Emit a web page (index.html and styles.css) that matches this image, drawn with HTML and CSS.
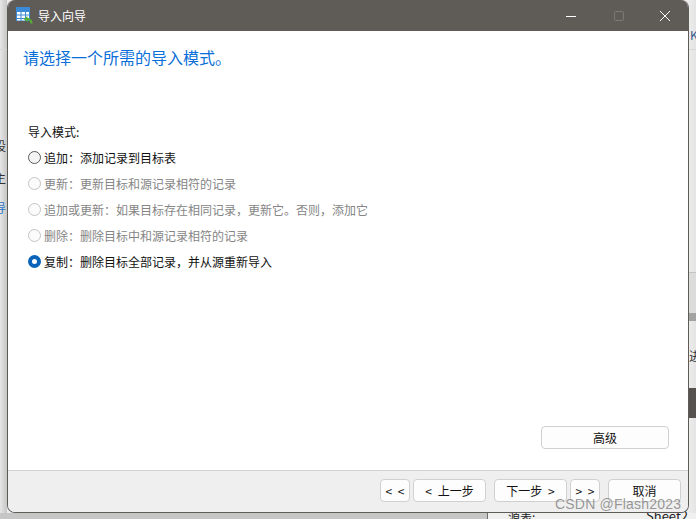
FILE: index.html
```html
<!DOCTYPE html>
<html lang="zh-CN">
<head>
    <meta charset="UTF-8">
    <title>导入向导</title>
    <link rel="stylesheet" href="styles.css">
</head>
<body>
    <!-- bits of the app behind the dialog -->
    <div class="behind-line l1"></div>
    <span class="behind behind-left b1">设</span>
    <span class="behind behind-left b2">主</span>
    <span class="behind behind-left b3">导</span>
    <span class="behind b4">K</span>
    <span class="behind b5">进</span>
    <div class="behind-band"></div>
    <div class="behind-dark"></div>
    <div class="behind-bottom"></div>
    <span class="behind b6">源表:</span>
    <span class="behind b7">Sheet2</span>

    <div class="window">
        <div class="titlebar">
            <svg class="app-icon" width="17" height="17" viewBox="0 0 17 17">
                <rect x="0" y="0" width="14" height="14" fill="#3b8ad8"/>
                <path d="M1 5h3.500v2.500H1zM5.500 5h3.500v2.500H5.500zM10 5h3v2.500h-3zM1 8.500h3.500V11H1zM5.500 8.500h3.500V11H5.500zM10 8.500h3V11h-3zM1 12h3.500v1.500H1zM5.500 12h3.500v1.500H5.500z" fill="#fff"/>
                <path d="M15.500 16.500c0-3-1.500-4.500-5-4.500" fill="none" stroke="#55b033" stroke-width="2.200"/>
                <path d="M7.500 12l4-3v6z" fill="#55b033"/>
            </svg>
            <span class="title">导入向导</span>
            <div class="win-controls">
                <svg class="win-btn" width="46" height="30" viewBox="0 0 46 30"><path d="M16 15.500h10" stroke="#fff" stroke-width="1"/></svg>
                <svg class="win-btn" width="46" height="30" viewBox="0 0 46 30"><rect x="18.500" y="10.500" width="9" height="9" rx="1" fill="none" stroke="#7d7a76"/></svg>
                <svg class="win-btn" width="46" height="30" viewBox="0 0 46 30"><path d="M18 10l10 10M28 10L18 20" stroke="#fff" stroke-width="1"/></svg>
            </div>
        </div>

        <div class="content">
            <h1 class="heading">请选择一个所需的导入模式。</h1>
            <div class="modes">
                <p class="modes-label">导入模式:</p>
                <div class="option"><span class="radio radio-normal"></span>追加&#xFF1A;添加记录到目标表</div>
                <div class="option disabled"><span class="radio"></span>更新&#xFF1A;更新目标和源记录相符的记录</div>
                <div class="option disabled"><span class="radio"></span>追加或更新&#xFF1A;如果目标存在相同记录&#xFF0C;更新它。否则&#xFF0C;添加它</div>
                <div class="option disabled"><span class="radio"></span>删除&#xFF1A;删除目标中和源记录相符的记录</div>
                <div class="option"><span class="radio radio-checked"></span>复制&#xFF1A;删除目标全部记录&#xFF0C;并从源重新导入</div>
            </div>
            <div class="advanced-row">
                <button class="btn btn-advanced">高级</button>
            </div>
        </div>

        <div class="footer">
            <button class="btn btn-skip">&lt; &lt;</button>
            <button class="btn btn-step">&lt; 上一步</button>
            <button class="btn btn-step btn-next">下一步 &gt;</button>
            <button class="btn btn-skip">&gt; &gt;</button>
            <button class="btn btn-step btn-cancel">取消</button>
        </div>
    </div>

    <span class="watermark">CSDN @Flash2023</span>
</body>
</html>
```

FILE: styles.css
```css
html, body {
    margin: 0;
    height: 100%;
}
body {
    position: relative;
    width: 696px;
    height: 519px;
    overflow: hidden;
    background: linear-gradient(90deg, #e6e6e6 0, #c6c6c6 7px, #ececec 7px, #ececec 689px, #e4e4e4 100%);
    font-family: "Noto Sans CJK SC", "Liberation Sans", sans-serif;
}
.behind {
    position: absolute;
    font-size: 12px;
    line-height: 14px;
    color: #333;
}
.behind-left {
    left: -6px;
}
.b1 { top: 139px; }
.b2 { top: 171px; }
.b3 { top: 201px; color: #2a74c4; }
.b4 { top: 28px; left: 690px; color: #3a5a8c; }
.b5 { top: 349px; left: 689px; }
.b6 { top: 510px; left: 508px; color: #222; }
.b7 { top: 509px; left: 646px; color: #222; font-size: 13px; }
.behind-line {
    position: absolute;
    left: 0;
    width: 100%;
    height: 1px;
    background: #d8d8d8;
}
.l1 { top: 49px; }
.behind-band {
    position: absolute;
    top: 272px;
    left: 689px;
    width: 7px;
    height: 40px;
    background: #dcdcdc;
    border-top: 1px solid #c4c4c4;
    border-bottom: 8px solid #a3a3a3;
}
.behind-dark {
    position: absolute;
    top: 388px;
    left: 689px;
    width: 7px;
    height: 30px;
    background: #555250;
}
.behind-bottom {
    position: absolute;
    top: 513px;
    left: 0;
    width: 100%;
    height: 6px;
    background: linear-gradient(90deg, #c6c6c6 0, #c6c6c6 487px, #6e6e6e 487px, #6e6e6e 488px, #f0f0f0 488px);
}
.window {
    position: absolute;
    top: 0;
    left: 7px;
    width: 682px;
    height: 513px;
    box-sizing: border-box;
    display: flex;
    flex-direction: column;
    border: 1px solid #5f5b57;
    border-top: none;
    border-radius: 8px;
    overflow: hidden;
    background: #fff;
}
.titlebar {
    height: 31px;
    flex-shrink: 0;
    display: flex;
    align-items: center;
    background-color: #5f5b57;
    padding-left: 8px;
}
.app-icon {
    margin-right: 5px;
}
.title {
    font-size: 12px;
    color: #fff;
}
.win-controls {
    margin-left: auto;
    display: flex;
}
.content {
    flex: 1;
    display: flex;
    flex-direction: column;
    padding: 0 19px 0 16px;
}
.heading {
    margin: 16px 0 0 -1px;
    font-size: 16px;
    line-height: 20px;
    font-weight: normal;
    color: #0a6fd8;
}
.modes {
    margin-top: 56px;
    padding-left: 4px;
}
.modes-label {
    margin: 0 0 3px;
    font-size: 12px;
    line-height: 18px;
    color: #111;
}
.option {
    display: flex;
    align-items: center;
    gap: 3px;
    height: 26px;
    font-size: 12px;
    color: #111;
}
.option.disabled {
    color: #858585;
}
.radio {
    box-sizing: border-box;
    width: 13px;
    height: 13px;
    flex-shrink: 0;
    border: 1px solid #c4c4c4;
    border-radius: 50%;
    background: #fbfbfb;
}
.radio-normal {
    border: 1.500px solid #5a5a5a;
    background: #f4f4f4;
}
.radio-checked {
    border: 4px solid #0a63b8;
    background: #fff;
}
.advanced-row {
    margin-top: auto;
    display: flex;
    justify-content: flex-end;
    padding-bottom: 21px;
}
.btn {
    box-sizing: border-box;
    height: 23px;
    padding: 0;
    font-family: inherit;
    font-size: 12px;
    word-spacing: 3px;
    color: #111;
    background: #fdfdfd;
    border: 1px solid #d0d0d0;
    border-radius: 4px;
}
.btn-advanced {
    width: 128px;
}
.footer {
    height: 42px;
    flex-shrink: 0;
    box-sizing: border-box;
    display: flex;
    align-items: flex-start;
    gap: 3px;
    padding: 8px 0 0 372px;
    background-color: #efefef;
    border-top: 1px solid #d2d2d2;
}
.btn-skip {
    width: 30px;
}
.btn-step {
    width: 73px;
}
.btn-next {
    margin-left: 5px;
}
.btn-cancel {
    margin-left: 5px;
}
.watermark {
    position: absolute;
    left: 555px;
    top: 496px;
    font-family: "Liberation Sans", sans-serif;
    font-size: 14px;
    line-height: 16px;
    letter-spacing: 0.200px;
    color: rgba(90, 90, 90, 0.6);
}
```
